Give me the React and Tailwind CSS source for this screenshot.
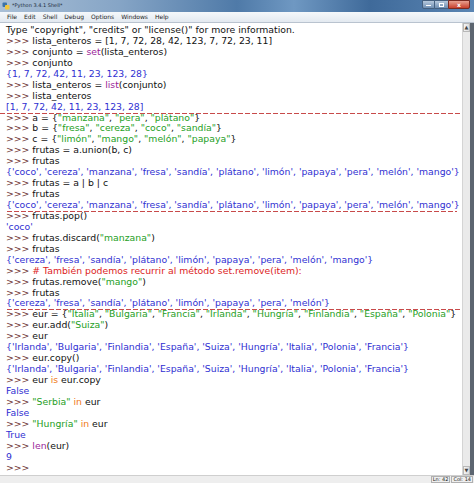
import React from 'react';

// token colours, IDLE style
const tone = {
  P: 'text-[#6e3434]',
  K: 'text-[#111111]',
  O: 'text-[#3030d2]',
  S: 'text-[#25a025]',
  B: 'text-[#9a259a]',
  C: 'text-[#dc1c1c]',
  W: 'text-[#f07a20]',
};

const frutas1 = "{'coco', 'cereza', 'manzana', 'fresa', 'sandía', 'plátano', 'limón', 'papaya', 'pera', 'melón', 'mango'}";
const eurOut = "{'Irlanda', 'Bulgaria', 'Finlandia', 'España', 'Suiza', 'Hungría', 'Italia', 'Polonia', 'Francia'}";

const lines = [
  { seg: [['K', 'Type "copyright", "credits" or "license()" for more information.']] },
  { p: 1, seg: [['K', 'lista_enteros = [1, 7, 72, 28, 42, 123, 7, 72, 23, 11]']] },
  { p: 1, seg: [['K', 'conjunto = '], ['B', 'set'], ['K', '(lista_enteros)']] },
  { p: 1, seg: [['K', 'conjunto']] },
  { seg: [['O', '{1, 7, 72, 42, 11, 23, 123, 28}']] },
  { p: 1, seg: [['K', 'lista_enteros = '], ['B', 'list'], ['K', '(conjunto)']] },
  { p: 1, seg: [['K', 'lista_enteros']] },
  { seg: [['O', '[1, 7, 72, 42, 11, 23, 123, 28]']], dash: 'left-[-6px] w-[462px]' },
  { p: 1, seg: [['K', 'a = {'], ['S', '"manzana"'], ['K', ', '], ['S', '"pera"'], ['K', ', '], ['S', '"plátano"'], ['K', '}']] },
  { p: 1, seg: [['K', 'b = {'], ['S', '"fresa"'], ['K', ', '], ['S', '"cereza"'], ['K', ', '], ['S', '"coco"'], ['K', ', '], ['S', '"sandía"'], ['K', '}']] },
  { p: 1, seg: [['K', 'c = {'], ['S', '"limón"'], ['K', ', '], ['S', '"mango"'], ['K', ', '], ['S', '"melón"'], ['K', ', '], ['S', '"papaya"'], ['K', '}']] },
  { p: 1, seg: [['K', 'frutas = a.union(b, c)']] },
  { p: 1, seg: [['K', 'frutas']] },
  { seg: [['O', frutas1]] },
  { p: 1, seg: [['K', 'frutas = a | b | c']] },
  { p: 1, seg: [['K', 'frutas']] },
  { seg: [['O', frutas1]], dash: 'left-[1px] w-[450px]' },
  { p: 1, seg: [['K', 'frutas.pop()']] },
  { seg: [['O', "'coco'"]] },
  { p: 1, seg: [['K', 'frutas.discard('], ['S', '"manzana"'], ['K', ')']] },
  { p: 1, seg: [['K', 'frutas']] },
  { seg: [['O', "{'cereza', 'fresa', 'sandía', 'plátano', 'limón', 'papaya', 'pera', 'melón', 'mango'}"]] },
  { p: 1, seg: [['C', '# También podemos recurrir al método set.remove(item):']] },
  { p: 1, seg: [['K', 'frutas.remove('], ['S', '"mango"'], ['K', ')']] },
  { p: 1, seg: [['K', 'frutas']] },
  { seg: [['O', "{'cereza', 'fresa', 'sandía', 'plátano', 'limón', 'papaya', 'pera', 'melón'}"]], dash: 'left-[1px] w-[453px]' },
  {
    p: 1,
    seg: [
      ['K', 'eur = {'], ['S', '"Italia"'], ['K', ', '], ['S', '"Bulgaria"'], ['K', ', '], ['S', '"Francia"'], ['K', ', '],
      ['S', '"Irlanda"'], ['K', ', '], ['S', '"Hungría"'], ['K', ', '], ['S', '"Finlandia"'], ['K', ', '],
      ['S', '"España"'], ['K', ', '], ['S', '"Polonia"'], ['K', '}'],
    ],
  },
  { p: 1, seg: [['K', 'eur.add('], ['S', '"Suiza"'], ['K', ')']] },
  { p: 1, seg: [['K', 'eur']] },
  { seg: [['O', eurOut]] },
  { p: 1, seg: [['K', 'eur.copy()']] },
  { seg: [['O', eurOut]] },
  { p: 1, seg: [['K', 'eur '], ['W', 'is'], ['K', ' eur.copy']] },
  { seg: [['O', 'False']] },
  { p: 1, seg: [['S', '"Serbia"'], ['K', ' '], ['W', 'in'], ['K', ' eur']] },
  { seg: [['O', 'False']] },
  { p: 1, seg: [['S', '"Hungría"'], ['K', ' '], ['W', 'in'], ['K', ' eur']] },
  { seg: [['O', 'True']] },
  { p: 1, seg: [['B', 'len'], ['K', '(eur)']] },
  { seg: [['O', '9']] },
  { p: 1, seg: [] },
];

function PyIcon() {
  return (
    <svg width="8" height="8" viewBox="0 0 8 8">
      <rect x="0.5" y="0.5" width="4.5" height="4.5" rx="1" fill="#3b73a8" />
      <rect x="3" y="3" width="4.5" height="4.5" rx="1" fill="#f2c73c" />
    </svg>
  );
}

function WinButtons() {
  return (
    <div className="flex items-start h-full pr-[4px]">
      <div className="w-[13px] h-[9px] rounded-bl-[2px] bg-[linear-gradient(#b7c9dd,#6f8fb3)] border border-[#45607f] flex items-end justify-center pb-[2px]">
        <div className="w-[5px] h-[1.5px] bg-white" />
      </div>
      <div className="w-[13px] h-[9px] bg-[linear-gradient(#b7c9dd,#6f8fb3)] border-y border-[#45607f] flex items-center justify-center">
        <div className="w-[5px] h-[4px] border border-white" />
      </div>
      <div className="w-[22px] h-[9px] rounded-br-[2px] bg-[linear-gradient(#e8a08f,#c8402c)] border border-[#7a2a20] flex items-center justify-center text-white text-[6px] leading-none font-bold">
        x
      </div>
    </div>
  );
}

export default function App() {
  return (
    <div className="w-[474px] h-[483px] overflow-hidden bg-white flex flex-col font-['DejaVu_Sans','Liberation_Sans',sans-serif]">
      {/* title bar */}
      <div className="h-[12px] flex items-start justify-between bg-[linear-gradient(90deg,#a9bfd6,#86a5c6_25%,#4f7aa8_50%,#6f98c2_62%,#3f6a9a_78%,#5a85b3)]">
        <div className="flex items-center gap-[2px] pl-[2px] h-[11px]">
          <PyIcon />
          <span className="text-[5px] leading-none text-[#1b2a3a]">*Python 3.4.1 Shell*</span>
        </div>
        <WinButtons />
      </div>

      {/* menu bar */}
      <div className="h-[11px] flex items-center gap-[5px] pl-[6px] bg-[linear-gradient(#f5f8fb,#e3e9f0)] border-b border-[#b9c3cf] text-[6px] leading-none text-[#1d1d1d]">
        {['File', 'Edit', 'Shell', 'Debug', 'Options', 'Windows', 'Help'].map((m) => (
          <span key={m} className="px-[1px]">{m}</span>
        ))}
      </div>

      {/* shell */}
      <div className="flex flex-1 min-h-0">
        <div className="flex-1 min-w-0 overflow-hidden pl-[6px] pt-[2px] text-[9.3px] leading-[10.94px]">
          {lines.map((ln, i) => (
            <div key={i} className="relative whitespace-pre h-[10.94px]">
              {ln.p ? <span className={tone.P}>{'>>> '}</span> : null}
              {ln.seg.map(([c, t], j) => (
                <span key={j} className={tone[c]}>{t}</span>
              ))}
              {ln.dash && (
                <div className={`absolute bottom-[-1px] h-px bg-[repeating-linear-gradient(90deg,#c84a4a_0_5px,transparent_5px_7px)] ${ln.dash}`} />
              )}
            </div>
          ))}
        </div>

        {/* scrollbar */}
        <div className="w-[8px] flex flex-col bg-[#eaeaea] border-l border-[#d4d4d4]">
          <div className="h-[9px] bg-[linear-gradient(90deg,#f4f4f4,#dcdcdc)] border border-[#b8b8b8] flex items-center justify-center text-[5px] leading-none text-[#444]">▲</div>
          <div className="flex-1" />
          <div className="h-[9px] bg-[linear-gradient(90deg,#f4f4f4,#dcdcdc)] border border-[#b8b8b8] flex items-center justify-center text-[5px] leading-none text-[#444]">▼</div>
        </div>
        <div className="w-[4px] bg-[#5c6570]" />
      </div>

      {/* status bar */}
      <div className="h-[8px] flex items-center justify-end gap-[1px] pr-[1px] bg-[#eeeeee] border-t border-[#cfcfcf] text-[5px] leading-none text-[#222]">
        <span className="border border-[#b0b0b0] px-[1px]">Ln: 42</span>
        <span className="border border-[#b0b0b0] px-[1px]">Col: 14</span>
      </div>
    </div>
  );
}
